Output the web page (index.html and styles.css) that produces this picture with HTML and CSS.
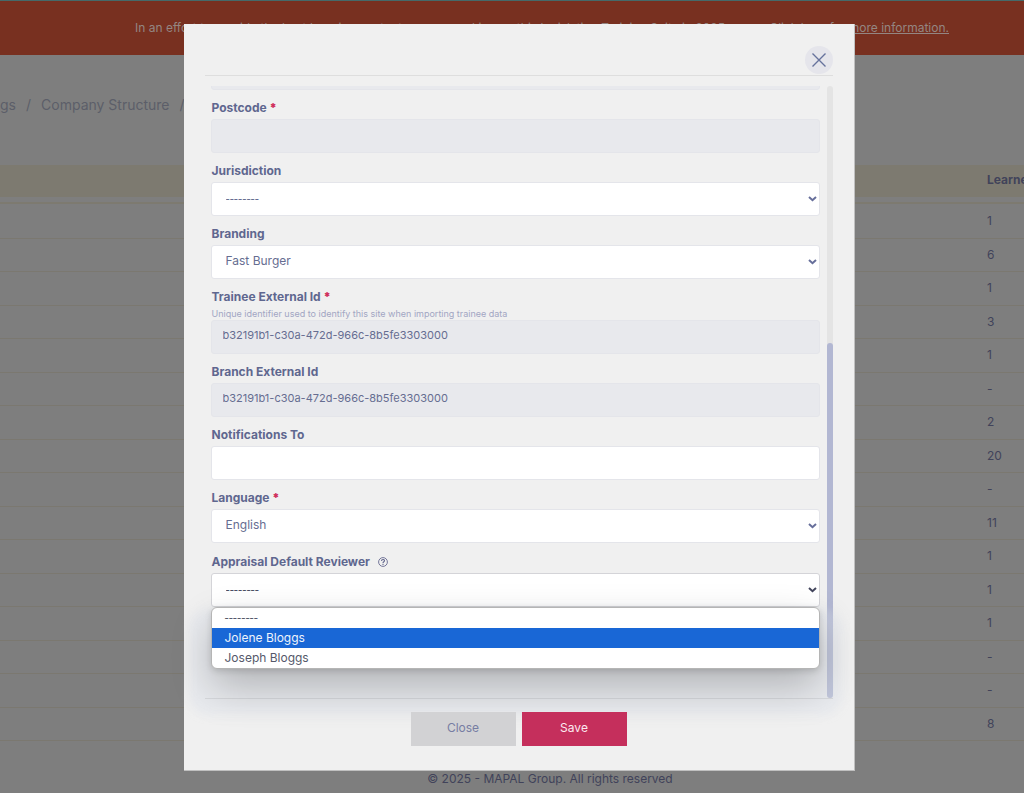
FILE: index.html
```html
<!DOCTYPE html>
<html lang="en">
<head>
  <meta charset="UTF-8" />
  <meta name="viewport" content="width=device-width, initial-scale=1.0" />
  <title>Company Structure</title>
  <link rel="stylesheet" href="styles.css">
</head>
<body>
  <div class="page">
    <div class="banner">
      <span>In an effort to provide the best learning content, we are working on this legislation Training Suite in 2025.</span>
      <a href="#">Click here for more information.</a>
    </div>

    <nav class="breadcrumb">
      <span>gs</span><span>/</span><span>Company Structure</span><span>/</span>
    </nav>

    <table class="sites">
      <thead>
        <tr><th class="wide"></th><th>Learners</th></tr>
      </thead>
      <tbody id="rows"></tbody>
    </table>

    <footer class="page-footer">© 2025 - MAPAL Group. All rights reserved</footer>
  </div>

  <div class="overlay">
    <form class="modal" role="dialog" aria-label="Edit site">
      <div class="modal-header">
        <button type="button" class="close" aria-label="Close">
          <svg width="16" height="16" viewBox="0 0 16 16"><path d="M1.5 1.5l13 13M14.5 1.5l-13 13" stroke="#66729c" stroke-width="1.4" fill="none"/></svg>
        </button>
      </div>

      <div class="modal-body">
        <div class="fields">
          <div class="clipped"><input class="control" type="text" disabled aria-label="Town"></div>
          <div class="field">
            <label for="postcode">Postcode <b class="required">*</b></label>
            <input class="control" id="postcode" type="text" disabled>
          </div>
          <div class="field">
            <label for="jurisdiction">Jurisdiction</label>
            <select class="control blank" id="jurisdiction"><option>--------</option></select>
          </div>
          <div class="field">
            <label for="branding">Branding</label>
            <select class="control" id="branding"><option>Fast Burger</option></select>
          </div>
          <div class="field">
            <label for="trainee">Trainee External Id <b class="required">*</b></label>
            <small class="help">Unique identifier used to identify this site when importing trainee data</small>
            <input class="control" id="trainee" type="text" value="b32191b1-c30a-472d-966c-8b5fe3303000" disabled>
          </div>
          <div class="field">
            <label for="branch">Branch External Id</label>
            <input class="control" id="branch" type="text" value="b32191b1-c30a-472d-966c-8b5fe3303000" disabled>
          </div>
          <div class="field">
            <label for="notify">Notifications To</label>
            <input class="control" id="notify" type="text">
          </div>
          <div class="field">
            <label for="language">Language <b class="required">*</b></label>
            <select class="control" id="language"><option>English</option></select>
          </div>
          <div class="field open">
            <label for="reviewer">Appraisal Default Reviewer
              <svg class="hint" width="10" height="10" viewBox="0 0 10 10" fill="none" stroke="#66698f"><circle cx="5" cy="5" r="4.4" stroke-width=".9"/><path d="M3.5 4c0-2 3-2 3-.2C6.500 4.800 5 4.800 5 6" stroke-width="1.1"/><path d="M5 6.800v1.100" stroke-width="1.1"/></svg>
            </label>
            <select class="control blank" id="reviewer"><option>--------</option></select>
            <ul class="menu" role="listbox">
              <li role="option" class="blank">--------</li>
              <li role="option" class="active" aria-selected="true">Jolene Bloggs</li>
              <li role="option">Joseph Bloggs</li>
            </ul>
          </div>
        </div>
        <div class="track"><div class="thumb"></div></div>
      </div>

      <div class="modal-footer">
        <button type="button" class="btn">Close</button>
        <button type="button" class="btn btn-save">Save</button>
      </div>
    </form>
  </div>

  <script>
    // learner count for each site
    const learners = ['1', '6', '1', '3', '1', '-', '2', '20', '-', '11', '1', '1', '1', '-', '-', '8'];
    document.getElementById('rows').innerHTML = learners
      .map(n => `<tr><td></td><td>${n}</td></tr>`)
      .join('');
  </script>
</body>
</html>
```
FILE: styles.css
```css
* {
  box-sizing: border-box;
}
body {
  margin: 0;
  font-family: Inter, "Open Sans", sans-serif;
  font-size: 12px;
  color: #41435a;
  background-color: #7e7e7e;
  overflow: hidden;
}
button, input, select {
  font-family: inherit;
  font-size: 12px;
}

/* page behind the dialog */
.banner {
  display: flex;
  justify-content: space-between;
  gap: 4px;
  height: 55px;
  padding: 0 75px 0 135px;
  border-top: 1px solid #456a6a;
  line-height: 53px;
  white-space: nowrap;
  background-color: #783020;
  color: #948682;
}
.banner a {
  color: inherit;
}
.breadcrumb {
  display: flex;
  gap: 10px;
  padding: 40px 0 50px;
  font-size: 14px;
  line-height: 20px;
  color: #5c5e69;
}
.sites {
  width: 100%;
  table-layout: fixed;
  border-collapse: separate;
  border-spacing: 0;
}
.sites th {
  height: 32px;
  padding: 0 0 4px;
  text-align: left;
  background-color: #7d7a70;
  width: 37px;
}
.sites th.wide {
  width: auto;
}
.sites thead::after {
  content: "";
  display: block;
  height: 5px;
}
.sites td {
  height: 34px;
  padding: 0 0 1px;
  line-height: 16px;
  border-bottom: 1px solid #7b7870;
}
.sites tr:nth-child(even) td {
  height: 33px;
}
.sites tbody tr:first-child td {
  height: 37px;
  border-top: 2px solid #7d7a70;
}
.page-footer {
  padding: 30px 0 5px 76px;
  line-height: 16px;
  text-align: center;
}

/* dialog */
.overlay {
  position: fixed;
  inset: 0;
  padding: 24px 0 0 14px;
}
.modal {
  width: 94%;
  max-width: 671px;
  margin: 0 auto;
  padding: 0 21px 24px;
  background-color: #f0f0f0;
  border: 1px solid #c0c0c0;
  border-width: 0 1px 1px 0;
  color: #5f678f;
}
.modal-header {
  display: flex;
  justify-content: flex-end;
  padding: 22px 0 1px;
  border-bottom: 1px solid #dedede;
}
.close {
  display: flex;
  align-items: center;
  justify-content: center;
  width: 28px;
  height: 28px;
  padding: 0;
  border: none;
  border-radius: 50%;
  background-color: #e5e5eb;
}
.modal-body {
  display: flex;
  gap: 7px;
  margin-top: 10px;
  padding-left: 6px;
}
.fields {
  flex: 1;
  padding-bottom: 91px;
}
.clipped {
  display: flex;
  align-items: flex-end;
  height: 4px;
  margin-bottom: 11px;
  overflow: hidden;
}
.field {
  position: relative;
  display: flex;
  flex-direction: column;
  margin-bottom: 11px;
}
.field label {
  height: 18px;
  padding-left: 1px;
  line-height: 13px;
  font-weight: 700;
}
.required {
  color: #cf2e5b;
}
.help {
  height: 12px;
  padding-left: 1px;
  font-size: 9px;
  line-height: 11px;
  color: #a2a6c3;
}
.control {
  width: 100%;
  height: 34px;
  flex: none;
  padding: 0 11px 4px;
  border: 1px solid #e4e5ea;
  border-radius: 3px;
  background-color: #fff;
  font-size: 11px;
  color: #666d91;
}
select.control {
  appearance: none;
  padding: 0 24px 3px 14px;
  font-size: 12px;
  background-image: url("data:image/svg+xml,%3Csvg xmlns='http://www.w3.org/2000/svg' width='9' height='6'%3E%3Cpath d='M1 1l3.500 3.200L8 1' fill='none' stroke='%23666e9a' stroke-width='2'/%3E%3C/svg%3E");
  background-repeat: no-repeat;
  background-position: right 2px center;
}
.control:disabled {
  background-color: #e8e9ed;
}
.open {
  margin-bottom: 0;
}
.open label {
  height: 19px;
  line-height: 15px;
}
.open select.control {
  border-color: #d4d4d8;
  color: #4a4d63;
  background-image: url("data:image/svg+xml,%3Csvg xmlns='http://www.w3.org/2000/svg' width='9' height='6'%3E%3Cpath d='M1 1l3.500 3.200L8 1' fill='none' stroke='%2342455c' stroke-width='2'/%3E%3C/svg%3E");
}
.hint {
  margin-left: 5px;
  vertical-align: -1px;
}
.menu {
  position: absolute;
  top: 100%;
  left: 0;
  right: 0;
  margin: 0;
  padding: 0;
  list-style: none;
  overflow: hidden;
  border: 1px solid #b5b5b5;
  border-radius: 6px;
  background-color: #fff;
  color: #55586a;
  box-shadow:
    0 2px 6px rgba(0, 0, 0, 0.14),
    0 18px 40px rgba(0, 0, 0, 0.24),
    0 24px 8px 22px rgba(222, 226, 238, 0.35);
}
.menu li {
  height: 20px;
  padding-left: 13px;
  line-height: 19px;
}
.menu .active {
  background-color: #1967d6;
  color: #eef3fc;
}
/* the hyphen run of an empty choice */
select.blank, .menu .blank {
  font-family: "Open Sans", sans-serif;
  font-size: 13px;
}
.track {
  display: flex;
  align-items: flex-end;
  width: 6px;
  border-radius: 3px;
  background-color: #e4e4e4;
}
.thumb {
  width: 100%;
  height: 58%;
  border-radius: 3px;
  background-color: #b2b7d2;
}
.modal-footer {
  display: flex;
  justify-content: center;
  gap: 6px;
  padding-top: 13px;
  border-top: 1px solid #d4d4d4;
}
.btn {
  position: relative;
  z-index: 1;
  width: 105px;
  height: 34px;
  padding: 0 0 3px;
  border: none;
  background-color: #d2d2d4;
  color: #777da3;
}
.btn-save {
  background-color: #c52f5c;
  color: #fbeaf0;
}
```
